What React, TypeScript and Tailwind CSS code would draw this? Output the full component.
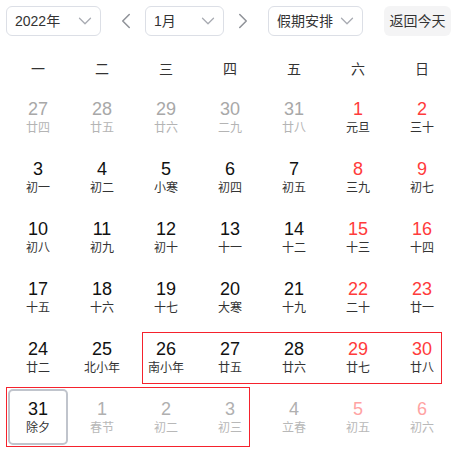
import { ChevronDown, ChevronLeft, ChevronRight } from 'lucide-react'

type Day = { d: number; l: string; kind: 'prev' | 'cur' | 'next'; red?: boolean; sel?: boolean }

const weeks: Day[][] = [
	[
		{ d: 27, l: '廿四', kind: 'prev' },
		{ d: 28, l: '廿五', kind: 'prev' },
		{ d: 29, l: '廿六', kind: 'prev' },
		{ d: 30, l: '二九', kind: 'prev' },
		{ d: 31, l: '廿八', kind: 'prev' },
		{ d: 1, l: '元旦', kind: 'cur', red: true },
		{ d: 2, l: '三十', kind: 'cur', red: true },
	],
	[
		{ d: 3, l: '初一', kind: 'cur' },
		{ d: 4, l: '初二', kind: 'cur' },
		{ d: 5, l: '小寒', kind: 'cur' },
		{ d: 6, l: '初四', kind: 'cur' },
		{ d: 7, l: '初五', kind: 'cur' },
		{ d: 8, l: '三九', kind: 'cur', red: true },
		{ d: 9, l: '初七', kind: 'cur', red: true },
	],
	[
		{ d: 10, l: '初八', kind: 'cur' },
		{ d: 11, l: '初九', kind: 'cur' },
		{ d: 12, l: '初十', kind: 'cur' },
		{ d: 13, l: '十一', kind: 'cur' },
		{ d: 14, l: '十二', kind: 'cur' },
		{ d: 15, l: '十三', kind: 'cur', red: true },
		{ d: 16, l: '十四', kind: 'cur', red: true },
	],
	[
		{ d: 17, l: '十五', kind: 'cur' },
		{ d: 18, l: '十六', kind: 'cur' },
		{ d: 19, l: '十七', kind: 'cur' },
		{ d: 20, l: '大寒', kind: 'cur' },
		{ d: 21, l: '十九', kind: 'cur' },
		{ d: 22, l: '二十', kind: 'cur', red: true },
		{ d: 23, l: '廿一', kind: 'cur', red: true },
	],
	[
		{ d: 24, l: '廿二', kind: 'cur' },
		{ d: 25, l: '北小年', kind: 'cur' },
		{ d: 26, l: '南小年', kind: 'cur' },
		{ d: 27, l: '廿五', kind: 'cur' },
		{ d: 28, l: '廿六', kind: 'cur' },
		{ d: 29, l: '廿七', kind: 'cur', red: true },
		{ d: 30, l: '廿八', kind: 'cur', red: true },
	],
	[
		{ d: 31, l: '除夕', kind: 'cur', sel: true },
		{ d: 1, l: '春节', kind: 'next' },
		{ d: 2, l: '初二', kind: 'next' },
		{ d: 3, l: '初三', kind: 'next' },
		{ d: 4, l: '立春', kind: 'next' },
		{ d: 5, l: '初五', kind: 'next', red: true },
		{ d: 6, l: '初六', kind: 'next', red: true },
	],
]

function Select({ label, width }: { label: string; width: string }) {
	return (
		<div
			className={`${width} h-[30px] flex items-center justify-between pl-[8px] pr-[4px] border border-[#dcdfe6] rounded-[6px] text-[14px] text-[#333]`}
		>
			<span>{label}</span>
			<ChevronDown className="w-[22px] h-[22px] text-[#a8abb2]" strokeWidth={1.4} />
		</div>
	)
}

function Cell({ day }: { day: Day }) {
	let num = 'text-[#111]'
	let lunar = 'text-[#333]'
	if (day.kind === 'prev') {
		num = 'text-[#a8a8a8]'
		lunar = 'text-[#b4b4b4]'
	} else if (day.kind === 'next') {
		num = day.red ? 'text-[#ffa3a3]' : 'text-[#b0b0b0]'
		lunar = 'text-[#b8b8b8]'
	} else if (day.red) {
		num = 'text-[#ff3b3b]'
	}
	return (
		<div className="h-[60px] p-[2px]">
			<div
				className={`h-full flex flex-col items-center justify-center rounded-[5px] ${
					day.sel ? 'border-2 border-[#c0c4cc]' : ''
				}`}
			>
				<span className={`text-[18px] leading-[20px] ${num}`}>{day.d}</span>
				<span className={`text-[12px] leading-[16px] mt-[1px] ${lunar}`}>{day.l}</span>
			</div>
		</div>
	)
}

export default function App() {
	return (
		<div
			className="relative w-[457px] h-[452px] bg-white px-[6px] pt-[6px]"
			style={{ fontFamily: '"Liberation Sans", "Noto Sans CJK SC", sans-serif' }}
		>
			<div className="flex items-center h-[30px]">
				<Select label="2022年" width="w-[95px]" />
				<ChevronLeft className="ml-[12px] mr-[6px] w-[26px] h-[26px] text-[#909399]" strokeWidth={1.4} />
				<Select label="1月" width="w-[79px]" />
				<ChevronRight className="ml-[6px] mr-[12px] w-[26px] h-[26px] text-[#909399]" strokeWidth={1.4} />
				<Select label="假期安排" width="w-[95px]" />
				<button className="ml-[21px] w-[67px] h-[30px] rounded-[6px] bg-[#f4f4f5] text-[14px] text-[#333]">
					返回今天
				</button>
			</div>
			<div className="grid grid-cols-7 w-[448px] mt-[16px] h-[35px] items-center text-[14px] text-[#333]">
				{['一', '二', '三', '四', '五', '六', '日'].map((w) => (
					<div key={w} className="text-center">
						{w}
					</div>
				))}
			</div>
			<div className="grid grid-cols-7 w-[448px]">
				{weeks.flat().map((day, i) => (
					<Cell key={i} day={day} />
				))}
			</div>
			<div className="absolute left-[142px] top-[332px] w-[300px] h-[52px] border border-[#f5222d]" />
			<div className="absolute left-[6px] top-[387px] w-[244px] h-[60px] border border-[#f5222d]" />
		</div>
	)
}
